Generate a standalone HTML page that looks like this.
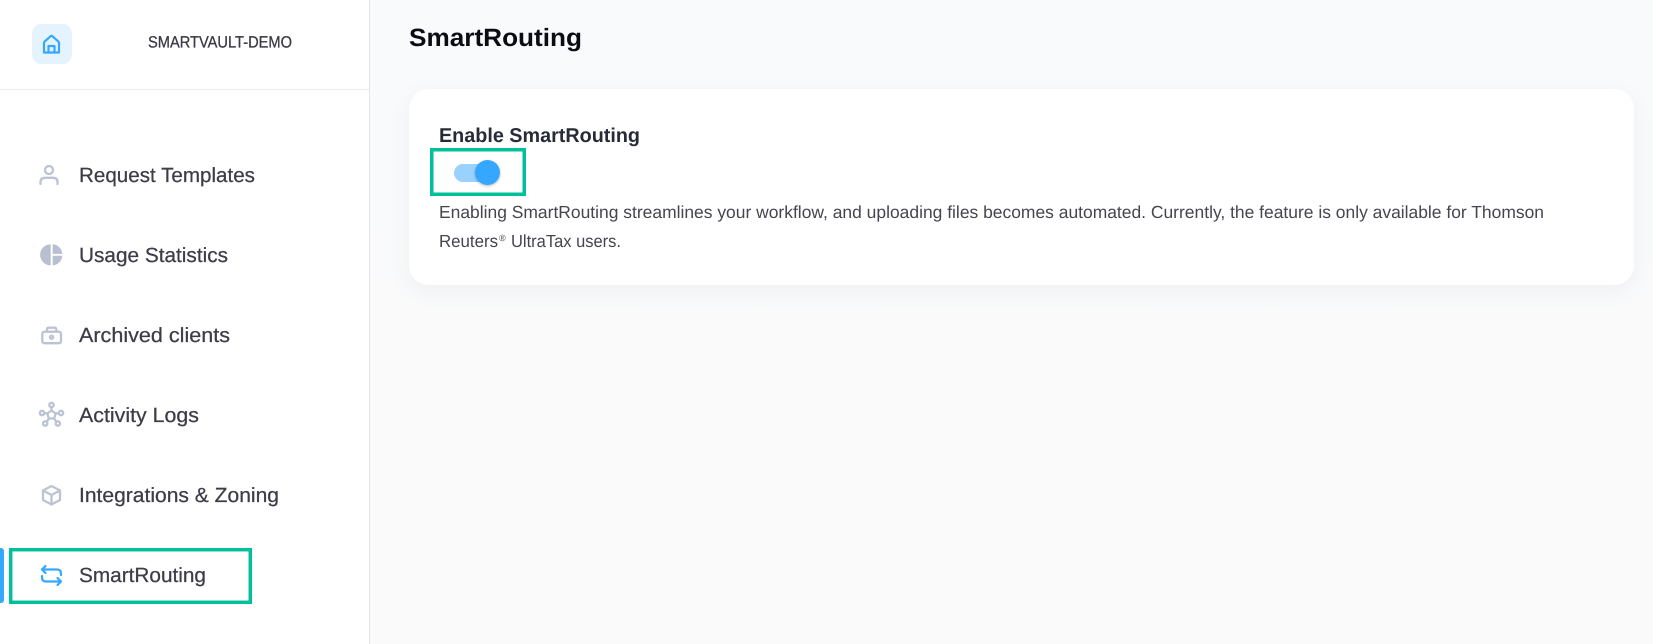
<!DOCTYPE html>
<html lang="en">
<head>
<meta charset="utf-8">
<title>SmartRouting</title>
<style>
html,body{margin:0;padding:0;width:1653px;height:644px;overflow:hidden;background:#fff}
svg{display:block;position:absolute;left:0;top:0}
text{font-family:"Liberation Sans",sans-serif;text-rendering:geometricPrecision}
.nav{font-size:20.5px;fill:#3d3d47;stroke:#3d3d47;stroke-width:.25px}
.desc{font-size:17.5px;fill:#45454e}
.ic{fill:none;stroke:#bcc3d3;stroke-width:2.3;stroke-linecap:round;stroke-linejoin:round}
.bl{fill:none;stroke:#35a7ff;stroke-width:2.2;stroke-linecap:round;stroke-linejoin:round}
</style>
</head>
<body>
<svg width="1653" height="644" viewBox="0 0 1653 644" xmlns="http://www.w3.org/2000/svg">
<defs>
<linearGradient id="bg" x1="0" y1="0" x2="0" y2="1"><stop offset="0" stop-color="#f9fafc"/><stop offset="1" stop-color="#fafafa"/></linearGradient>
<filter id="cs" x="-5%" y="-20%" width="110%" height="150%"><feDropShadow dx="0" dy="6" stdDeviation="10" flood-color="#000" flood-opacity=".045"/></filter>
<filter id="ts" x="-50%" y="-50%" width="200%" height="200%"><feDropShadow dx="0" dy="1" stdDeviation="1.2" flood-color="#000" flood-opacity=".28"/></filter>
</defs>

<!-- main background -->
<rect x="370" y="0" width="1283" height="644" fill="url(#bg)"/>
<!-- sidebar -->
<rect x="0" y="0" width="369" height="644" fill="#fff"/>
<rect x="369" y="0" width="1" height="644" fill="#e3e3e7"/>
<rect x="0" y="89" width="369" height="1" fill="#ececf0"/>

<!-- header -->
<rect x="32" y="24" width="40" height="40" rx="9" fill="#e5f3ff"/>
<path class="bl" d="M44 43 Q44 42.2 44.6 41.6 L50.5 36.3 Q51.5 35.5 52.5 36.3 L58.4 41.6 Q59 42.2 59 43 V52.5 H44 Z"/>
<path class="bl" d="M48.5 52.5 V46 H54.5 V52.5"/>
<text x="148" y="47.5" font-size="16.3" fill="#3a3a44" stroke="#3a3a44" stroke-width=".3" textLength="144" lengthAdjust="spacingAndGlyphs">SMARTVAULT-DEMO</text>

<!-- nav: person -->
<circle class="ic" cx="49" cy="170" r="4"/>
<path class="ic" d="M40.5 184 V182 Q40.5 177.8 45 177.8 H53 Q57.5 177.8 57.5 182 V184"/>
<text class="nav" x="79" y="182" textLength="176" lengthAdjust="spacingAndGlyphs">Request Templates</text>

<!-- nav: pie -->
<path d="M50.7 244.2 V265.4 A10.6 10.6 0 0 1 50.7 244.2 Z" fill="#b8bfd0"/>
<path d="M52.7 244.2 A10.4 10.4 0 0 1 62.3 253.9 H52.7 Z" fill="#b8bfd0"/>
<path d="M52.7 255.7 H62.3 A10.4 10.4 0 0 1 52.7 265.4 Z" fill="#b8bfd0"/>
<text class="nav" x="79" y="262" textLength="149" lengthAdjust="spacingAndGlyphs">Usage Statistics</text>

<!-- nav: briefcase -->
<rect class="ic" x="42.3" y="331.7" width="18.7" height="11.5" rx="2"/>
<path class="ic" d="M47 331 V329.5 Q47 327.7 49 327.7 H54.3 Q56.3 327.7 56.3 329.5 V331"/>
<circle class="ic" cx="51.6" cy="337.2" r="1.6" stroke-width="1.8"/>
<text class="nav" x="79" y="342" textLength="151" lengthAdjust="spacingAndGlyphs">Archived clients</text>

<!-- nav: network -->
<path class="ic" stroke-width="1.9" d="M51.5 410.5 L55.7 413.5 L54.1 418.5 H48.9 L47.3 413.5 Z"/>
<path class="ic" stroke-width="1.9" d="M51.5 410.5 V407.5 M55.7 413.5 L58.8 413 M54.1 418.5 L56.3 421.8 M48.9 418.5 L46.7 421.8 M47.3 413.5 L44.2 413"/>
<circle class="ic" stroke-width="1.9" cx="51.5" cy="405" r="2.2"/>
<circle class="ic" stroke-width="1.9" cx="42" cy="413" r="2.2"/>
<circle class="ic" stroke-width="1.9" cx="61" cy="413" r="2.2"/>
<circle class="ic" stroke-width="1.9" cx="45.2" cy="423.5" r="2.2"/>
<circle class="ic" stroke-width="1.9" cx="57.8" cy="423.5" r="2.2"/>
<text class="nav" x="79" y="422" textLength="120" lengthAdjust="spacingAndGlyphs">Activity Logs</text>

<!-- nav: cube -->
<path class="ic" d="M51.5 486 L60 490.5 V500 L51.5 504.5 L43 500 V490.5 Z"/>
<path class="ic" d="M43 490.5 L51.5 495 L60 490.5 M51.5 495 V504.5"/>
<text class="nav" x="79" y="502" textLength="200" lengthAdjust="spacingAndGlyphs">Integrations &amp; Zoning</text>

<!-- active -->
<rect x="-4" y="548" width="8" height="55" rx="3" fill="#35a7ff"/>
<rect x="10.7" y="549.7" width="239.6" height="52.6" fill="none" stroke="#00bf9a" stroke-width="3.5"/>
<path class="bl" d="M45.5 566 L42 569.5 L45.5 573 M42 569.5 H57 Q61 569.5 61 573.5 V575"/>
<path class="bl" d="M57.5 578 L61 581.5 L57.5 585 M61 581.5 H46 Q42 581.5 42 577.5 V576"/>
<text class="nav" x="79" y="582" textLength="127" lengthAdjust="spacingAndGlyphs">SmartRouting</text>

<!-- page title -->
<text x="409" y="46" font-size="25" font-weight="700" fill="#0c0c14" textLength="173" lengthAdjust="spacingAndGlyphs">SmartRouting</text>

<!-- card -->
<rect x="409" y="89" width="1225" height="196" rx="20" fill="#fff" filter="url(#cs)"/>
<text x="439" y="142" font-size="20" font-weight="700" fill="#272b37" textLength="201" lengthAdjust="spacingAndGlyphs">Enable SmartRouting</text>

<!-- toggle -->
<rect x="454" y="164" width="42" height="18" rx="9" fill="#99d1ff"/>
<circle cx="487.5" cy="172.5" r="12.5" fill="#35a7ff" filter="url(#ts)"/>
<rect x="431.75" y="149.75" width="92.5" height="44.5" fill="none" stroke="#00bf9a" stroke-width="3.5"/>

<!-- description -->
<text class="desc" x="439" y="218" textLength="1105" lengthAdjust="spacingAndGlyphs">Enabling SmartRouting streamlines your workflow, and uploading files becomes automated. Currently, the feature is only available for Thomson</text>
<text class="desc" x="439" y="247" textLength="59" lengthAdjust="spacingAndGlyphs">Reuters</text>
<text x="499" y="241" font-size="9" fill="#45454e">®</text>
<text class="desc" x="511" y="247" textLength="110" lengthAdjust="spacingAndGlyphs">UltraTax users.</text>
</svg>
</body>
</html>
